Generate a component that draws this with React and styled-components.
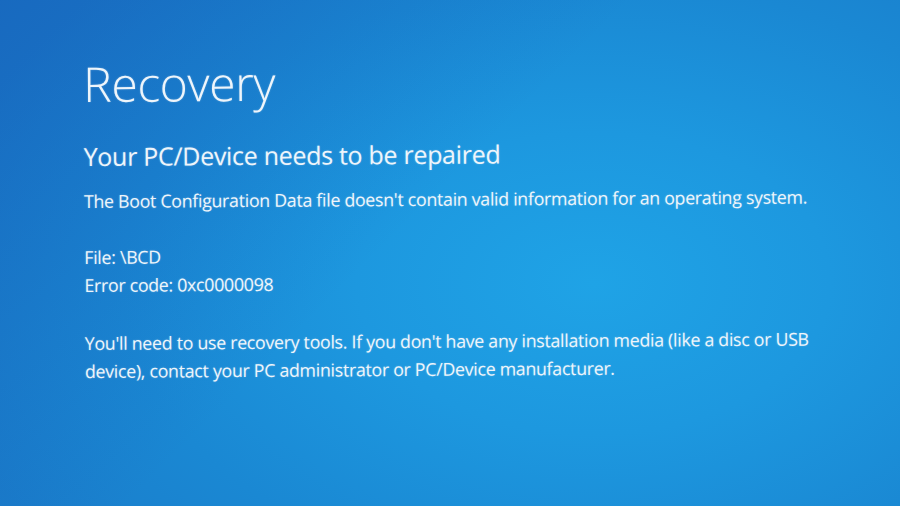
import React from 'react';
import styled, { createGlobalStyle } from 'styled-components';

const GlobalStyle = createGlobalStyle`
	html, body {
		margin: 0;
		padding: 0;
		width: 100%;
		height: 100%;
		overflow: hidden;
	}
	#root {
		height: 100%;
	}
`;

const Screen = styled.div`
	width: 900px;
	height: 506px;
	box-sizing: border-box;
	padding: 52px 0 0 83px;
	background:
		linear-gradient(135deg, rgba(20, 70, 170, 0.35) 0%, rgba(20, 70, 170, 0) 45%),
		radial-gradient(ellipse 75% 85% at 66% 56%, #1fa3e6 0%, #1d98df 35%, #1a88d3 70%, #1a7dcb 100%);
	font-family: 'Open Sans', 'Noto Sans', sans-serif;
	color: #eef5fb;
	overflow: hidden;
`;

const Content = styled.div`
	display: flex;
	flex-direction: column;
	transform: rotate(-0.35deg);
	transform-origin: left top;
	text-shadow: 0 0 2px rgba(255, 255, 255, 0.3);
`;

const Title = styled.h1`
	margin: 0;
	font-size: 48px;
	font-weight: 300;
	line-height: 64px;
	letter-spacing: -0.4px;
`;

const Subtitle = styled.h2`
	margin: 22px 0 0;
	font-size: 25px;
	font-weight: 400;
	line-height: 36px;
	letter-spacing: -0.3px;
`;

const Para = styled.p`
	margin: ${(p) => p.$top || 0}px 0 0;
	font-size: 17.8px;
	font-weight: 400;
	line-height: 28px;
	letter-spacing: -0.3px;
`;

export default function App() {
	return (
		<>
			<GlobalStyle />
			<Screen>
				<Content>
					<Title>Recovery</Title>
					<Subtitle>Your PC/Device needs to be repaired</Subtitle>
					<Para $top={13}>
						The Boot Configuration Data file doesn't contain valid information for an operating system.
					</Para>
					<Para $top={28}>
						File: \BCD
						<br />
						Error code: 0xc0000098
					</Para>
					<Para $top={30}>
						You'll need to use recovery tools. If you don't have any installation media (like a disc or USB
						<br />
						device), contact your PC administrator or PC/Device manufacturer.
					</Para>
				</Content>
			</Screen>
		</>
	);
}
